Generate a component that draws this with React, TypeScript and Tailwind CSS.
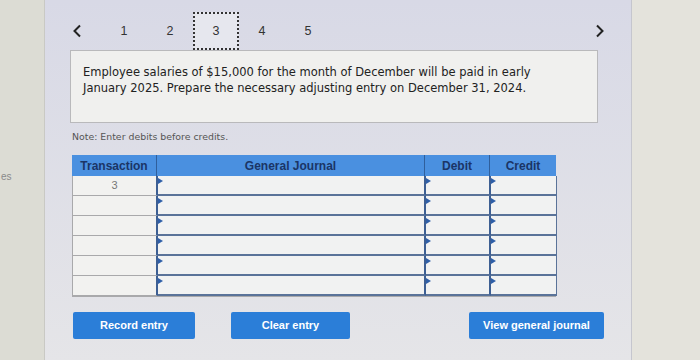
import React from "react";

const rows = [0, 1, 2, 3, 4, 5];

function InputCell({ className }: { className: string }) {
  return (
    <div className={`relative h-[20px] bg-[#f1f2f2] border-b-2 border-[#5a7399] ${className}`}>
      <span className="absolute left-0 top-[2px] w-0 h-0 border-y-[3px] border-y-transparent border-l-[5px] border-l-[#2f5fa8]" />
    </div>
  );
}

export default function App() {
  return (
    <div
      className="w-[700px] h-[360px] flex overflow-hidden"
      style={{ fontFamily: '"Liberation Sans", Arial, sans-serif' }}
    >
      {/* left strip */}
      <div className="w-[45px] shrink-0 bg-[#dcdcd4] border-r border-[#c9c9c4] pt-[163px]">
        <span className="text-[10px] text-[#8a8a8a] pl-[1px]">es</span>
      </div>

      {/* main panel */}
      <div className="w-[587px] shrink-0 bg-linear-to-b from-[#d8d9e6] to-[#e5e5e8] border-r border-[#c5c6ce]">
        {/* nav */}
        <div className="flex items-center h-[50px] pt-[12px]">
          <div className="w-[56px] flex justify-center pl-[8px]">
            <svg width="10" height="14" viewBox="0 0 10 14">
              <path d="M8 1.5 L2.5 7 L8 12.5" fill="none" stroke="#222" strokeWidth="2" />
            </svg>
          </div>
          {[1, 2, 3, 4, 5].map((n) => (
            <div
              key={n}
              className={`w-[46px] h-[38px] flex items-center justify-center text-[12.5px] text-[#333] ${
                n === 3 ? "border-2 border-dotted border-[#333] bg-[#e6e7ee]" : ""
              }`}
            >
              {n}
            </div>
          ))}
          <div className="flex-1 flex justify-end pr-[26px]">
            <svg width="10" height="14" viewBox="0 0 10 14">
              <path d="M2 1.5 L7.5 7 L2 12.5" fill="none" stroke="#222" strokeWidth="2" />
            </svg>
          </div>
        </div>

        {/* question */}
        <div className="ml-[25px] w-[528px] h-[73px] bg-[#f0f0ee] border border-[#b9b9bb] pl-[12px] pt-[13px]">
          <p
            className="text-[11.5px] leading-[16px] text-[#222]"
            style={{ fontFamily: '"DejaVu Sans", Verdana, sans-serif' }}
          >
            Employee salaries of $15,000 for the month of December will be paid in early
            <br />
            January 2025. Prepare the necessary adjusting entry on December 31, 2024.
          </p>
        </div>

        {/* note */}
        <p
          className="ml-[27px] mt-[8px] text-[9.4px] leading-[12px] text-[#555]"
          style={{ fontFamily: '"DejaVu Sans", Verdana, sans-serif' }}
        >
          Note: Enter debits before credits.
        </p>

        {/* table */}
        <div className="ml-[27px] mt-[12px] w-[484px]">
          <div className="grid grid-cols-[85px_268px_65px_66px] h-[21px] bg-[#4a90e0] text-[#1b3566] text-[12px] font-bold">
            <div className="flex items-center justify-center border-r border-[#2f5f9c]">Transaction</div>
            <div className="flex items-center justify-center border-r border-[#2f5f9c]">General Journal</div>
            <div className="flex items-center justify-center border-r border-[#2f5f9c]">Debit</div>
            <div className="flex items-center justify-center">Credit</div>
          </div>
          <div className="grid grid-cols-[85px_268px_65px_66px] border-l border-b border-[#a9a9ab]">
            {rows.map((r) => (
              <React.Fragment key={r}>
                <div className="h-[20px] bg-[#f2f2f0] border-b border-r-2 border-[#a9a9ab] border-r-[#3d5f93] flex items-center justify-center text-[11px] text-[#777]">
                  {r === 0 ? "3" : ""}
                </div>
                <InputCell className="border-r-2 border-r-[#3d5f93]" />
                <InputCell className="border-r-2 border-r-[#3d5f93]" />
                <InputCell className="border-r border-r-[#5a7399]" />
              </React.Fragment>
            ))}
          </div>
        </div>

        {/* buttons */}
        <div className="flex mt-[15px] text-white text-[11px] font-bold">
          <button className="ml-[28px] w-[122px] h-[27px] bg-[#2b7ed8] rounded-[2px]">Record entry</button>
          <button className="ml-[36px] w-[119px] h-[27px] bg-[#2b7ed8] rounded-[2px]">Clear entry</button>
          <button className="ml-[119px] w-[135px] h-[27px] bg-[#2b7ed8] rounded-[2px]">View general journal</button>
        </div>
      </div>

      {/* right strip */}
      <div className="flex-1 bg-[#e4e3dc]" />
    </div>
  );
}
